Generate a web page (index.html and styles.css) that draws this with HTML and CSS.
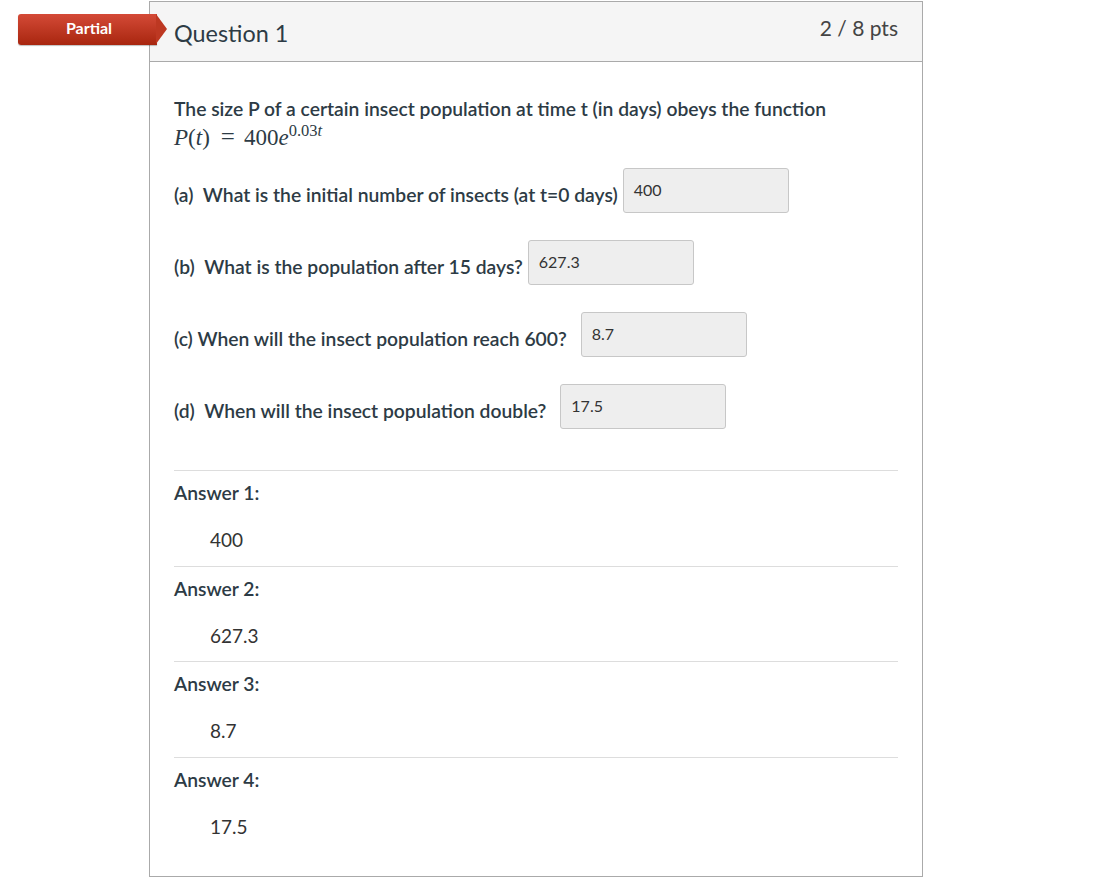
FILE: index.html
```html
<!DOCTYPE html>
<html>
<head>
<meta charset="utf-8">
<link rel="stylesheet" href="styles.css">
</head>
<body>
<div class="card">
  <div class="badge"><span class="badge-text">Partial</span></div>
  <div class="header">
    <span class="title">Question 1</span>
    <span class="pts">2 / 8 pts</span>
  </div>
  <div class="content">
    <p class="intro">The size P of a certain insect population at time t (in days) obeys the function<br>
      <span class="math"><i>P</i>(<i>t</i>)<span class="eq">=</span>400<i>e</i><sup>0.03<i>t</i></sup></span></p>
    <div class="qrow"><span class="qlabel">(a)&nbsp; What is the initial number of insects (at t=0 days)</span><span class="field">400</span></div>
    <div class="qrow"><span class="qlabel">(b)&nbsp; What is the population after 15 days?</span><span class="field">627.3</span></div>
    <div class="qrow"><span class="qlabel">(c) When will the insect population reach 600?</span><span class="field wide-gap">8.7</span></div>
    <div class="qrow"><span class="qlabel">(d)&nbsp; When will the insect population double?</span><span class="field wide-gap">17.5</span></div>
    <div class="answers">
      <div class="answer"><div class="alabel">Answer 1:</div><div class="avalue">400</div></div>
      <div class="answer"><div class="alabel">Answer 2:</div><div class="avalue">627.3</div></div>
      <div class="answer"><div class="alabel">Answer 3:</div><div class="avalue">8.7</div></div>
      <div class="answer"><div class="alabel">Answer 4:</div><div class="avalue">17.5</div></div>
    </div>
  </div>
</div>
</body>
</html>
```
FILE: styles.css
```css
html, body {
  margin: 0;
  padding: 0;
  background: #fff;
  font-family: Lato, "Liberation Sans", sans-serif;
  color: #2d3b45;
}
.card {
  position: relative;
  margin: 1px 0 0 149px;
  width: 772px;
  height: 874px;
  border: 1px solid #aaaaaa;
}
.badge {
  position: absolute;
  left: -132px;
  top: 12px;
  width: 150px;
  height: 31px;
}
.badge::before {
  content: "";
  position: absolute;
  left: 0;
  top: 0;
  width: 139px;
  height: 31px;
  border-radius: 3px 0 0 3px;
  background: linear-gradient(#d44a37, #a8260f);
  box-shadow: 0 1px 1px rgba(0,0,0,0.25);
}
.badge::after {
  content: "";
  position: absolute;
  left: 138px;
  top: 0;
  width: 0;
  height: 0;
  border-top: 15.5px solid transparent;
  border-bottom: 15.5px solid transparent;
  border-left: 11px solid #bd3822;
}
.badge-text {
  position: relative;
  z-index: 1;
  display: block;
  width: 142px;
  text-align: center;
  color: #fff;
  font-weight: bold;
  font-size: 16px;
  line-height: 28px;
}
.header {
  height: 59px;
  background: #f5f5f5;
  border-bottom: 1px solid #aaaaaa;
  display: flex;
  justify-content: space-between;
  align-items: flex-start;
  padding: 0 24px;
}
.title {
  font-size: 23.4px;
  margin-top: 17px;
  line-height: 28px;
  color: #2d3b45;
}
.pts {
  font-size: 21px;
  margin-top: 13px;
  line-height: 26px;
  color: #444;
}
.content {
  padding: 32px 24px 0 24px;
}
.intro {
  margin: 0;
  height: 58px;
  margin-bottom: 16px;
  font-size: 19.3px;
  font-weight: 600;
  line-height: 29px;
}
.math {
  font-family: "Liberation Serif", "DejaVu Serif", serif;
  font-size: 23px;
  font-weight: normal;
  line-height: 1;
}
.math .eq {
  font-size: 25px;
  margin: 0 9px 0 11px;
}
.math sup {
  font-size: 16.5px;
  vertical-align: 9px;
  line-height: 0;
}
.qrow {
  height: 72px;
  display: flex;
  align-items: flex-start;
}
.qlabel {
  font-size: 19.3px;
  font-weight: 600;
  line-height: 24px;
  margin-top: 15px;
}
.field {
  box-sizing: border-box;
  width: 166px;
  height: 45px;
  margin-left: 5px;
  background: #eeeeee;
  border: 1px solid #c7c7c7;
  border-radius: 3px;
  padding: 0 0 0 10px;
  font-size: 16px;
  line-height: 42px;
  color: #333;
}
.field.wide-gap {
  margin-left: 14px;
}
.answers {
  margin-top: 14px;
  border-top: 1px solid #dddddd;
}
.answer {
  height: 94.5px;
  border-bottom: 1px solid #dddddd;
}
.answer:last-child {
  border-bottom: none;
}
.alabel {
  font-size: 19.3px;
  font-weight: 600;
  padding-top: 10px;
  line-height: 24px;
}
.avalue {
  font-size: 19px;
  padding: 23px 0 0 36px;
  line-height: 24px;
  color: #333;
}
```
